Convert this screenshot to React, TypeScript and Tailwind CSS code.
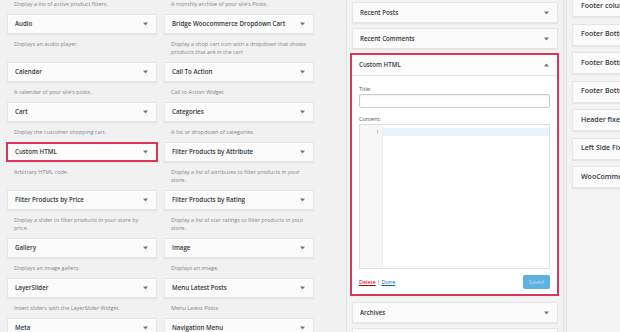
import React from "react";

type W = { t: string; d: string[]; red?: boolean };

const rows: [W, W][] = [
  [
    { t: "Audio", d: ["Displays an audio player."] },
    {
      t: "Bridge Woocommerce Dropdown Cart",
      d: ["Display a shop cart icon with a dropdown that shows", "products that are in the cart"],
    },
  ],
  [
    { t: "Calendar", d: ["A calendar of your site’s posts."] },
    { t: "Call To Action", d: ["Call to Action Widget"] },
  ],
  [
    { t: "Cart", d: ["Display the customer shopping cart."] },
    { t: "Categories", d: ["A list or dropdown of categories."] },
  ],
  [
    { t: "Custom HTML", d: ["Arbitrary HTML code."], red: true },
    {
      t: "Filter Products by Attribute",
      d: ["Display a list of attributes to filter products in your", "store."],
    },
  ],
  [
    {
      t: "Filter Products by Price",
      d: ["Display a slider to filter products in your store by", "price."],
    },
    {
      t: "Filter Products by Rating",
      d: ["Display a list of star ratings to filter products in your", "store."],
    },
  ],
  [
    { t: "Gallery", d: ["Displays an image gallery."] },
    { t: "Image", d: ["Displays an image."] },
  ],
  [
    { t: "LayerSlider", d: ["Insert sliders with the LayerSlider Widget"] },
    { t: "Menu Latest Posts", d: ["Menu Latest Posts"] },
  ],
  [
    { t: "Meta", d: [] },
    { t: "Navigation Menu", d: [] },
  ],
];

const font = { fontFamily: '"Open Sans", "Noto Sans", sans-serif' };

function Arrow({ up }: { up?: boolean }) {
  return (
    <svg width="5" height="4" viewBox="0 0 5 4" className="shrink-0">
      {up ? (
        <path d="M0 3.5 L2.5 0.5 L5 3.5 Z" fill="#72777c" />
      ) : (
        <path d="M0 0.5 L5 0.5 L2.5 3.5 Z" fill="#72777c" />
      )}
    </svg>
  );
}

function Box({ t, red, h = "h-[20px]" }: { t: string; red?: boolean; h?: string }) {
  return (
    <div
      className={`${h} flex items-center justify-between pl-[7px] pr-[8px] bg-[#fbfbfb] shadow-[0_1px_1px_rgba(0,0,0,0.05)] ${
        red ? "border-2 border-[#d9365e] -mx-px" : "border border-[#e5e5e5]"
      }`}
    >
      <span className="text-[6.2px] font-semibold text-[#32373c] whitespace-nowrap">{t}</span>
      <Arrow />
    </div>
  );
}

function Desc({ d }: { d: string[] }) {
  if (!d.length) return null;
  return (
    <div className="mt-[6px] mb-[6px] pl-[7px] text-[5.5px] leading-[8px] text-[#82878c] whitespace-nowrap">
      {d.map((l, i) => (
        <div key={i}>{l}</div>
      ))}
    </div>
  );
}

export default function App() {
  return (
    <div className="w-[620px] h-[332px] overflow-hidden bg-[#f1f1f1] flex" style={font}>
      {/* available widgets */}
      <div className="w-[346px] shrink-0 pl-[7px]">
        <div className="grid grid-cols-[150px_150px] gap-x-[7px]">
          <div className="mb-[6px] pl-[7px] text-[5.5px] leading-[8px] text-[#82878c] whitespace-nowrap">
            Display a list of active product filters.
          </div>
          <div className="mb-[6px] pl-[7px] text-[5.5px] leading-[8px] text-[#82878c] whitespace-nowrap">
            A monthly archive of your site’s Posts.
          </div>
          {rows.map(([a, b], i) => (
            <React.Fragment key={i}>
              <div className="flex flex-col">
                <Box t={a.t} red={a.red} />
                <Desc d={a.d} />
              </div>
              <div className="flex flex-col">
                <Box t={b.t} />
                <Desc d={b.d} />
              </div>
            </React.Fragment>
          ))}
        </div>
      </div>

      {/* sidebar */}
      <div className="w-[218px] shrink-0 border-x border-[#e2e2e2] bg-[#f3f3f3] px-[5px] pt-[2px] flex flex-col">
        <div className="flex flex-col gap-[5px]">
          <Box t="Recent Posts" h="h-[21px]" />
          <Box t="Recent Comments" h="h-[21px]" />
        </div>
        <div className="mt-[4px] ml-[-2px] mr-[-1px] border-2 border-[#d9365e] bg-white flex flex-col">
          <div className="h-[21px] flex items-center justify-between pl-[7px] pr-[8px] border-b border-[#e5e5e5] bg-[#fdfdfd]">
            <span className="text-[6.2px] font-semibold text-[#32373c]">Custom HTML</span>
            <Arrow up />
          </div>
          <div className="px-[7px] pt-[9px] pb-[5px] flex flex-col">
            <div className="text-[5.5px] leading-[8px] text-[#555]">Title:</div>
            <div className="mt-[1px] h-[14px] border border-[#c9c9c9] rounded-[2px] bg-white shadow-[inset_0_1px_2px_rgba(0,0,0,0.07)]" />
            <div className="mt-[7px] text-[5.5px] leading-[8px] text-[#555]">Content:</div>
            <div className="mt-[1px] h-[145px] border border-[#dddddd] flex">
              <div className="w-[23px] bg-[#f7f7f7] border-r border-[#eeeeee] pt-[3px] pr-[3px] text-right text-[5.5px] leading-[8px] text-[#999]">
                1
              </div>
              <div className="flex-1 pt-[3px]">
                <div className="h-[8px] bg-[#e8f2fe]" />
              </div>
            </div>
            <div className="mt-[6px] flex items-center justify-between">
              <div className="text-[5.5px] leading-[8px]">
                <span className="text-[#a00] underline">Delete</span>
                <span className="text-[#666]"> | </span>
                <span className="text-[#0073aa] underline">Done</span>
              </div>
              <div className="w-[27px] h-[14px] rounded-[2px] bg-[#5fb1de] flex items-center justify-center text-[5.5px] text-[#b8dcf0]">
                Saved
              </div>
            </div>
          </div>
        </div>
        <div className="mt-[6px] flex flex-col gap-[5px]">
          <Box t="Archives" h="h-[21px]" />
          <div className="h-[21px] bg-[#fbfbfb] border border-[#e5e5e5]" />
        </div>
      </div>

      {/* right sidebar */}
      <div className="flex-1 ml-[2px] border-l border-[#e2e2e2] bg-[#f3f3f3] pl-[5px]">
        <div className="mt-[-5px] flex flex-col gap-[6.5px]">
          {[
            "Footer column 1",
            "Footer Bottom Left",
            "Footer Bottom Right",
            "Footer Bottom Center",
            "Header fixed",
            "Left Side Fixed",
            "WooCommerce",
          ].map((t) => (
            <div
              key={t}
              className="h-[22px] w-[90px] flex items-center pl-[8px] bg-[#fbfbfb] border border-[#e5e5e5] shadow-[0_1px_1px_rgba(0,0,0,0.05)]"
            >
              <span className="text-[7px] font-semibold text-[#32373c] whitespace-nowrap">{t}</span>
            </div>
          ))}
        </div>
      </div>
    </div>
  );
}
